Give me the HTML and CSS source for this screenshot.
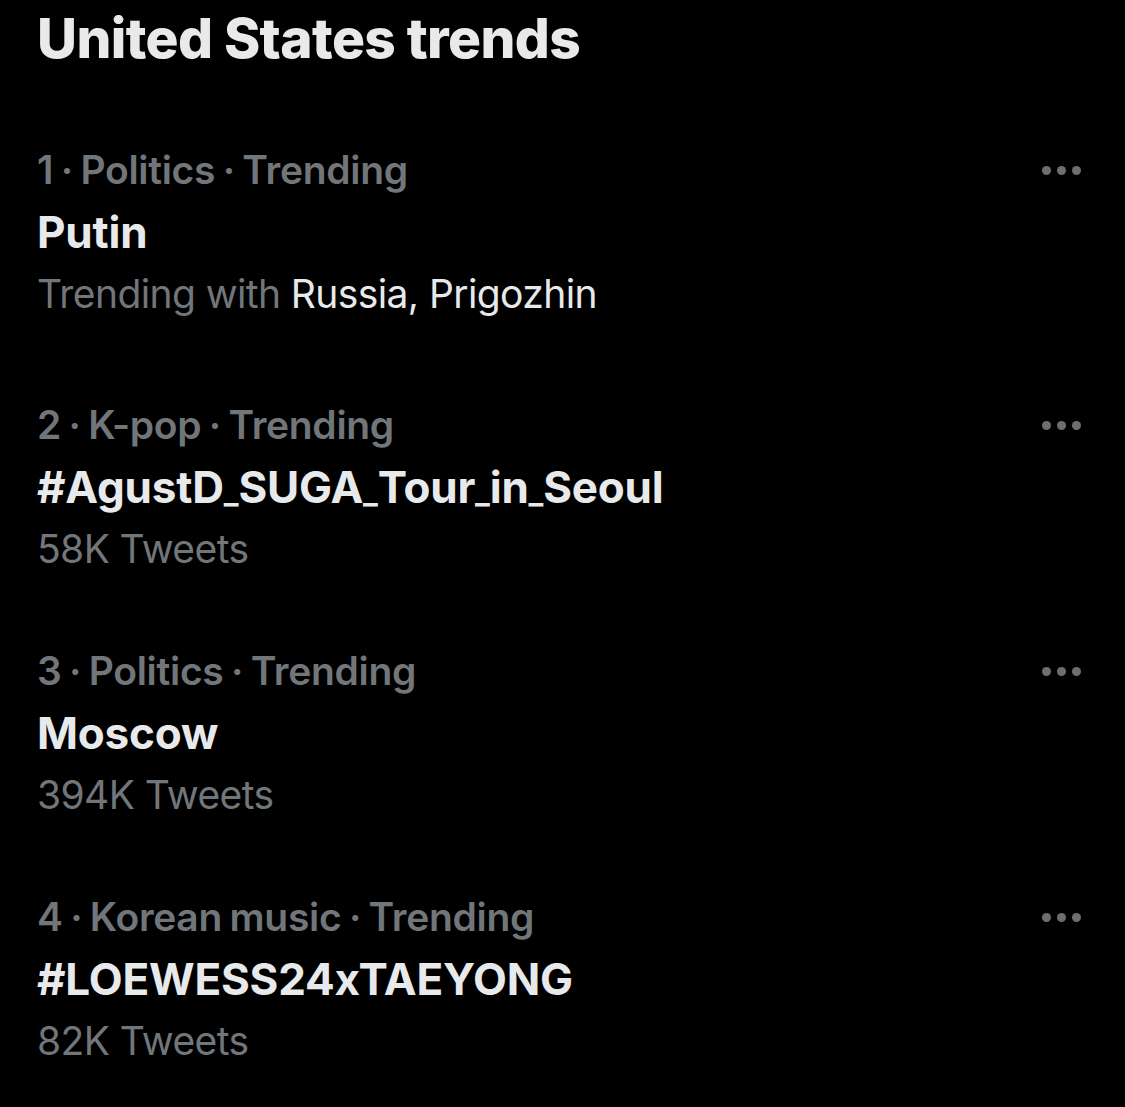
FILE: index.html
```html
<!DOCTYPE html>
<html lang="en">
<head>
    <meta charset="UTF-8">
    <meta name="viewport" content="width=device-width, initial-scale=1.0">
    <title>United States trends</title>
    <link rel="stylesheet" href="styles.css">
</head>
<body>
    <h1 class="page-title">United States trends</h1>

    <div class="trend-list">
        <div class="trend">
            <div class="trend-info">
                <div class="trend-meta">1 · Politics · Trending</div>
                <div class="trend-name">Putin</div>
                <div class="trend-sub with-related">Trending with <span class="related">Russia, Prigozhin</span></div>
            </div>
            <div class="more"><span></span><span></span><span></span></div>
        </div>
        <div class="trend">
            <div class="trend-info">
                <div class="trend-meta">2 · K-pop · Trending</div>
                <div class="trend-name">#AgustD<span class="us">_</span>SUGA<span class="us">_</span>Tour<span class="us">_</span>in<span class="us">_</span>Seoul</div>
                <div class="trend-sub">58K Tweets</div>
            </div>
            <div class="more"><span></span><span></span><span></span></div>
        </div>
        <div class="trend">
            <div class="trend-info">
                <div class="trend-meta">3 · Politics · Trending</div>
                <div class="trend-name">Moscow</div>
                <div class="trend-sub">394K Tweets</div>
            </div>
            <div class="more"><span></span><span></span><span></span></div>
        </div>
        <div class="trend">
            <div class="trend-info">
                <div class="trend-meta">4 · Korean music · Trending</div>
                <div class="trend-name">#LOEWESS24xTAEYONG</div>
                <div class="trend-sub">82K Tweets</div>
            </div>
            <div class="more"><span></span><span></span><span></span></div>
        </div>
    </div>
</body>
</html>
```

FILE: styles.css
```css
body {
    font-family: Inter, "Noto Sans", sans-serif;
    background-color: #000;
    color: #e7e9ea;
    margin: 0;
    padding: 0 44px 0 37px;
}
.page-title {
    font-size: 55px;
    line-height: 76px;
    font-weight: 800;
    letter-spacing: -0.6px;
    margin: 0;
}
.trend-list {
    display: flex;
    flex-direction: column;
    gap: 60px;
    margin-top: 63px;
}
.trend {
    display: flex;
    justify-content: space-between;
    align-items: flex-start;
}
.trend-meta {
    font-size: 39px;
    line-height: 62px;
    font-weight: 600;
    letter-spacing: -0.3px;
    word-spacing: -2px;
    color: #71767b;
}
.trend-name {
    font-size: 44px;
    line-height: 62px;
    font-weight: 700;
    letter-spacing: -0.2px;
}
.trend-name .us {
    font-size: 31px;
    line-height: 0;
}
.trend-sub {
    font-size: 39px;
    line-height: 62px;
    letter-spacing: -0.6px;
    color: #71767b;
}
.trend-sub.with-related {
    margin-bottom: 9px;
}
.related {
    color: #e7e9ea;
}
.more {
    display: flex;
    gap: 6px;
    height: 62px;
    align-items: center;
}
.more span {
    width: 9px;
    height: 9px;
    border-radius: 50%;
    background-color: #6b6f73;
}
```
